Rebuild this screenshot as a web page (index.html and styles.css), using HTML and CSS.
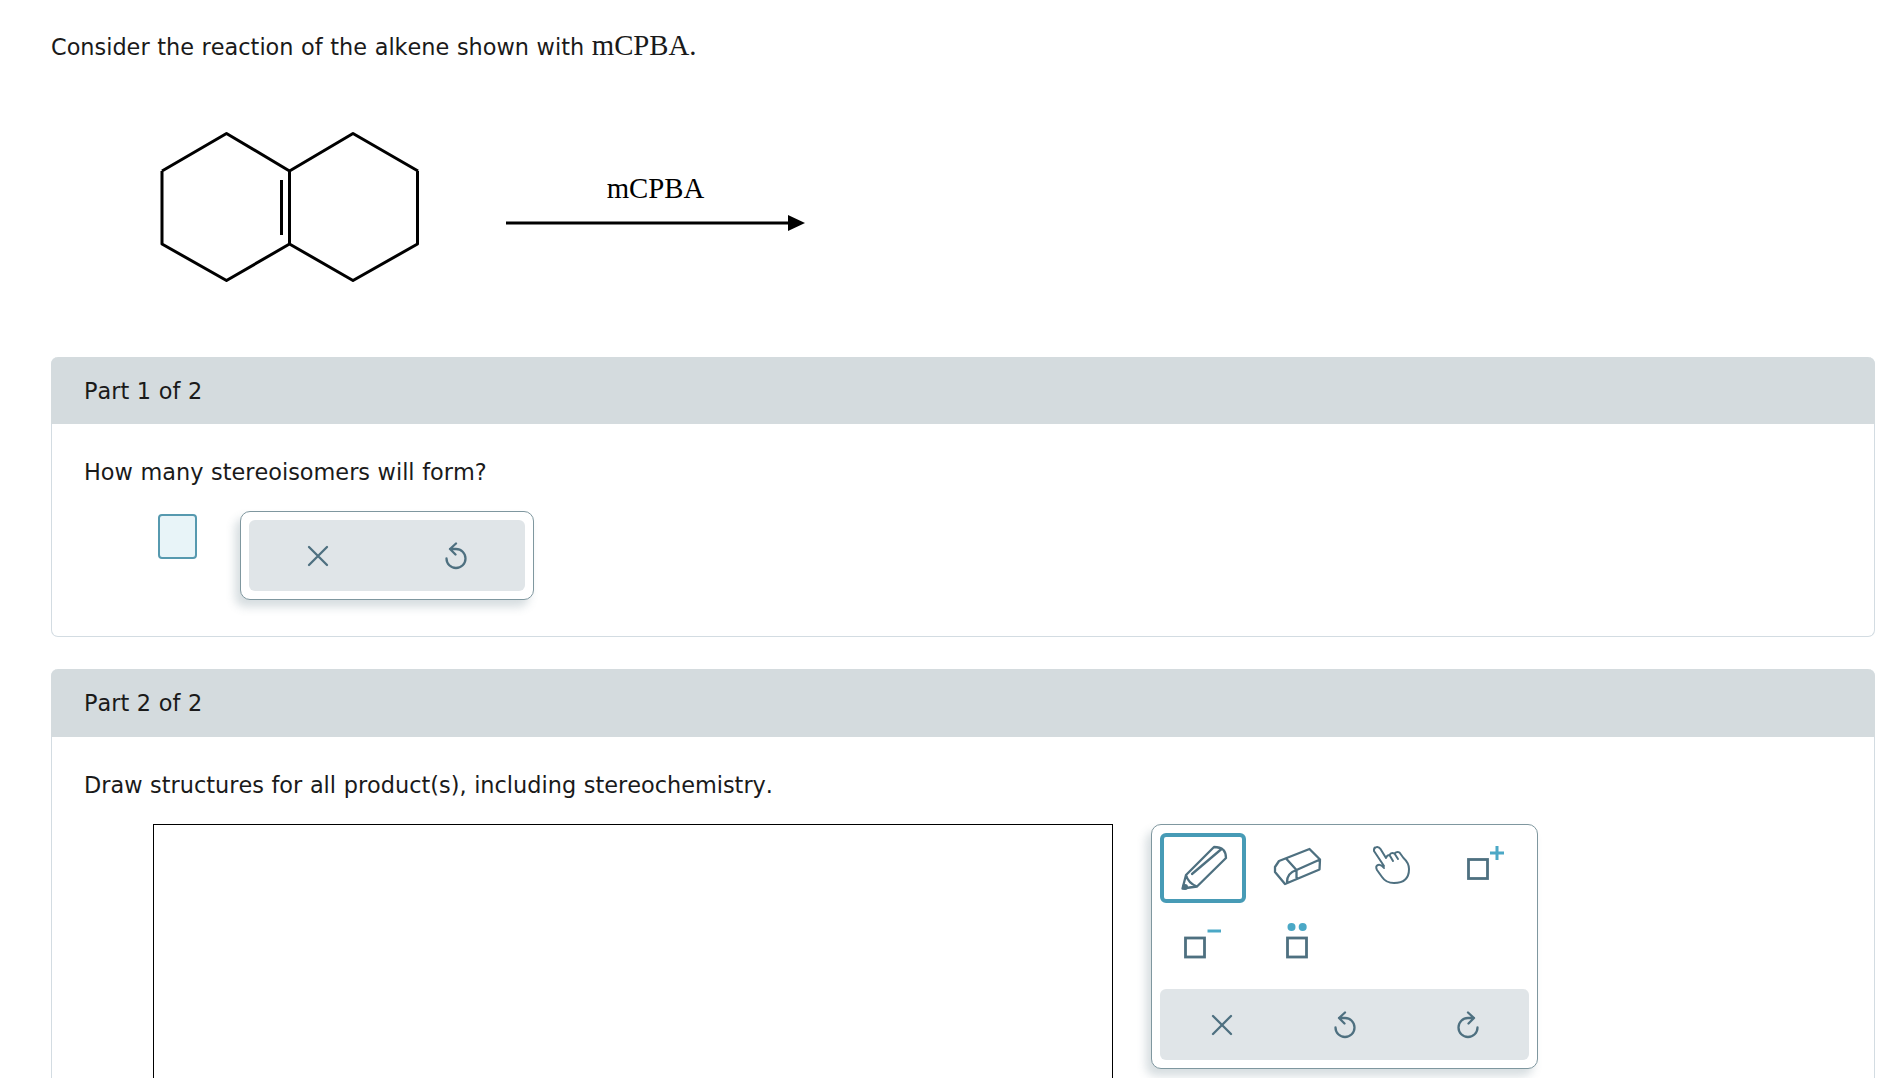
FILE: index.html
```html
<!DOCTYPE html>
<html lang="en">
<head>
<meta charset="utf-8">
<title>Alkene reaction with mCPBA</title>
<link rel="stylesheet" href="styles.css">
</head>
<body>
<main class="page">
  <p class="intro">Consider the reaction of the alkene shown with <span class="serif">mCPBA.</span></p>

  <div class="reaction">
    <svg class="molecule" width="270" height="160" viewBox="0 0 270 160">
      <path class="bond" d="M14 39 L78.500 1.500 L141.500 39 L205 1.500 L270 39 M14 39 V112 L78.500 148.500 L141.500 112 L205 148.500 L269.500 112 V39 M141.500 39 V112 M133.500 48 V103"/>
    </svg>
    <div class="arrow-wrap">
      <span class="reagent">mCPBA</span>
      <svg class="arrow" width="300" height="18" viewBox="0 0 300 18">
        <path class="arrow-line" d="M0 9 H285"/>
        <path class="arrow-head" d="M282 1 L299 9 L282 17 Z"/>
      </svg>
    </div>
  </div>

  <section class="panel">
    <h2 class="panel-head">Part 1 of 2</h2>
    <div class="panel-body">
      <p class="prompt">How many stereoisomers will form?</p>
      <div class="answer-row">
        <span class="answer-box"></span>
        <div class="toolbox small">
          <div class="actions">
            <button class="action" aria-label="Clear">
              <svg class="ico" width="24" height="24" viewBox="0 0 24 24"><path d="M3 3 L21 21 M21 3 L3 21"/></svg>
            </button>
            <button class="action" aria-label="Undo">
              <svg class="ico" width="24" height="28" viewBox="0 0 24 28"><path d="M6 7 H12 A9.500 9.500 0 1 1 2.500 16.500 M12 1.500 L6 7 L11.500 12.500"/></svg>
            </button>
          </div>
        </div>
      </div>
    </div>
  </section>

  <section class="panel second">
    <h2 class="panel-head">Part 2 of 2</h2>
    <div class="panel-body">
      <p class="prompt">Draw structures for all product(s), including stereochemistry.</p>
      <div class="draw-row">
        <div class="canvas"></div>
        <div class="toolbox">
          <div class="tools">
            <button class="tool active" aria-label="Draw">
              <svg class="ico" width="86" height="70" viewBox="0 0 86 70"><path d="M22.500 55.500 L26 42 L54 14 Q60 14 63.500 17 Q66 20 66 25 L37 53.500 Z M26 42 Q28 50 37 53.500 M32 41 L61.500 16"/><circle class="fill" cx="25" cy="54" r="3"/></svg>
            </button>
            <button class="tool" aria-label="Erase">
              <svg class="ico" width="86" height="70" viewBox="0 0 86 70"><path d="M21 34 L25 28 L55.500 16 L66 26.500 L65.500 36.500 L31 51 L21 39 Z M32.500 26 L42.500 37 L66 26.500 M42.500 37 V45 M42.500 37 Q33 40 33 49"/></svg>
            </button>
            <button class="tool" aria-label="Move">
              <svg class="ico thin" width="86" height="70" viewBox="0 0 86 70"><path d="M36 33 L26 18 Q25.500 14.500 28.500 14 Q31 13.500 32.500 16 L38 25 Q39 22 41.500 22 L45 28 M41.500 22 Q43 19 46.500 20.500 L50 26 M46.500 20.500 Q49 18 51.500 19.500 L55.500 25 Q61 30 61 36 Q61 50 46 50 Q38 50 34 44 L29 37 Q27 33 30 32 Q33 31 36 35"/></svg>
            </button>
            <button class="tool" aria-label="Increase charge">
              <svg class="ico" width="86" height="70" viewBox="0 0 86 70"><rect class="box" x="26.500" y="26.500" width="19" height="19"/><path class="accent" d="M48 20 H62 M55 13 V27"/></svg>
            </button>
            <button class="tool" aria-label="Decrease charge">
              <svg class="ico" width="86" height="70" viewBox="0 0 86 70"><rect class="box" x="25.500" y="27" width="19" height="19"/><path class="accent" d="M47.500 20 H61"/></svg>
            </button>
            <button class="tool" aria-label="Lone pair">
              <svg class="ico" width="86" height="70" viewBox="0 0 86 70"><rect class="box" x="33.500" y="27" width="19" height="19"/><circle class="dot" cx="37.500" cy="16" r="4"/><circle class="dot" cx="48.700" cy="16" r="4"/></svg>
            </button>
          </div>
          <div class="actions">
            <button class="action" aria-label="Clear">
              <svg class="ico" width="24" height="24" viewBox="0 0 24 24"><path d="M3 3 L21 21 M21 3 L3 21"/></svg>
            </button>
            <button class="action" aria-label="Undo">
              <svg class="ico" width="24" height="28" viewBox="0 0 24 28"><path d="M6 7 H12 A9.500 9.500 0 1 1 2.500 16.500 M12 1.500 L6 7 L11.500 12.500"/></svg>
            </button>
            <button class="action" aria-label="Redo">
              <svg class="ico" width="24" height="28" viewBox="0 0 24 28"><path d="M18 7 H12 A9.500 9.500 0 1 0 21.500 16.500 M12 1.500 L18 7 L12.500 12.500"/></svg>
            </button>
          </div>
        </div>
      </div>
    </div>
  </section>
</main>
</body>
</html>
```

FILE: styles.css
```css
html, body {
  margin: 0;
  height: 1078px;
  overflow: hidden;
  background: #fff;
}

.page {
  padding: 29px 29px 0 51px;
  font-family: "DejaVu Sans", sans-serif;
  font-size: 22.4px;
  font-kerning: none;
  word-spacing: 0.5px;
  line-height: 32px;
  color: #1a1a1a;
}

.intro {
  margin: 0;
}

.serif, .reagent {
  font-family: "Liberation Serif", serif;
  font-size: 28.8px;
  word-spacing: 0;
}

.reaction {
  display: flex;
  align-items: flex-start;
  height: 294px;
  margin-left: 97px;
}

.molecule {
  margin-top: 69px;
  overflow: visible;
}

.bond {
  fill: none;
  stroke: #000;
  stroke-width: 3;
  stroke-linejoin: round;
}

.arrow-wrap {
  display: flex;
  flex-direction: column;
  align-items: center;
  width: 300px;
  margin-top: 108px;
  margin-left: 88px;
}

.reagent {
  line-height: 34px;
  margin-right: 1px;
  color: #000;
}

.arrow {
  display: block;
  margin-top: 9px;
}

.arrow-line {
  stroke: #000;
  stroke-width: 3;
}

.arrow-head {
  fill: #000;
}

.panel {
  height: 280px;
  box-sizing: border-box;
  border: 1px solid #d3dce2;
  border-top: 0;
  border-radius: 7px;
}

.panel.second {
  height: 600px;
  margin-top: 32px;
}

.panel-head {
  display: flex;
  align-items: center;
  height: 67px;
  margin: 0 -1px;
  padding-left: 33px;
  background: #d4dbde;
  border-radius: 7px 7px 0 0;
  font-size: inherit;
  font-weight: 400;
}

.panel.second .panel-head {
  height: 68px;
}

.panel-body {
  padding: 32px 0 0 32px;
}

.prompt {
  margin: 0;
}

.answer-row {
  display: flex;
  align-items: flex-start;
  margin-top: 23px;
  margin-left: 74px;
}

.answer-box {
  box-sizing: border-box;
  width: 39px;
  height: 45px;
  margin-top: 3px;
  background: #e8f4f8;
  border: 2px solid #5699af;
  border-radius: 4px;
}

.toolbox {
  box-sizing: border-box;
  width: 387px;
  padding: 8px;
  background: #fff;
  border: 1px solid #7f979f;
  border-radius: 10px;
  box-shadow: -5px 7px 10px rgba(70, 100, 115, 0.22);
}

.toolbox.small {
  width: 294px;
  margin-left: 43px;
}

.actions {
  display: flex;
  height: 71px;
  background: #e0e5e8;
  border-radius: 6px;
}

.action, .tool {
  display: flex;
  align-items: center;
  justify-content: center;
  padding: 0;
  background: none;
  border: 0;
}

.action {
  flex: 1;
}

.tools {
  display: grid;
  grid-template-columns: repeat(4, 86px);
  grid-auto-rows: 70px;
  gap: 8px;
  margin-bottom: 8px;
}

.tool {
  position: relative;
  border-radius: 6px;
}

.tool.active::after {
  content: "";
  position: absolute;
  inset: 0;
  border: 4px solid #479bb6;
  border-radius: 6px;
}

.ico {
  display: block;
  fill: none;
  stroke: #4e7080;
  stroke-width: 2.300;
  stroke-linejoin: round;
  stroke-linecap: round;
}

.ico.thin {
  stroke-width: 2;
}

.ico .box {
  stroke-width: 2.800;
  stroke-linecap: butt;
  stroke-linejoin: miter;
}

.ico .accent {
  stroke: #4ba8c6;
  stroke-width: 3;
  stroke-linecap: butt;
}

.ico .dot {
  fill: #4ba8c6;
  stroke: none;
}

.ico .fill {
  fill: #4e7080;
  stroke: none;
}

.draw-row {
  display: flex;
  align-items: flex-start;
  margin-top: 23px;
  margin-left: 69px;
}

.canvas {
  box-sizing: border-box;
  width: 960px;
  height: 500px;
  border: 1px solid #000;
}

.draw-row .toolbox {
  margin-left: 38px;
}
```
